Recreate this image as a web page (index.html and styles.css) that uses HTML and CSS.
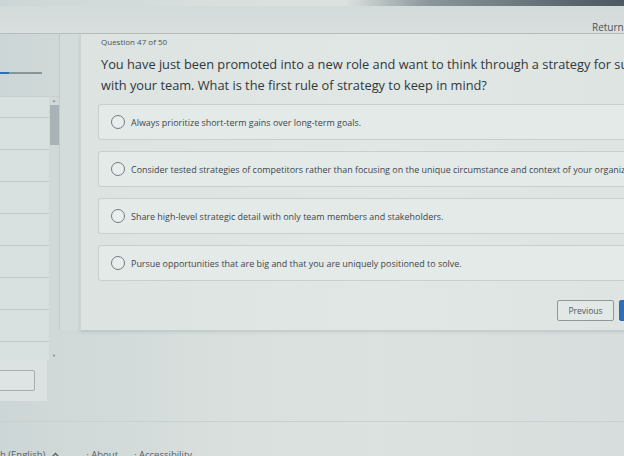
FILE: index.html
```html
<!DOCTYPE html>
<html lang="en">
<head>
<meta charset="utf-8">
<title>Question 47 of 50</title>
<link rel="stylesheet" href="styles.css">
</head>
<body>
<div class="frame">
  <div class="topband"></div>
  <header class="topbar">
    <span class="return">Return</span>
  </header>
  <div class="layout">
    <aside class="sidebar">
      <div class="progress"><div class="progress-fill"></div></div>
      <div class="list">
        <div class="rows">
          <div class="row first"></div>
          <div class="row"></div>
          <div class="row"></div>
          <div class="row"></div>
          <div class="row"></div>
          <div class="row"></div>
          <div class="row"></div>
          <div class="row"></div>
          <div class="row last"></div>
        </div>
        <div class="scrollbar">
          <span class="arrow">&#9650;</span>
          <div class="thumb"></div>
          <div class="track"></div>
          <span class="arrow">&#9660;</span>
        </div>
      </div>
      <div class="search"><div class="input"></div></div>
    </aside>
    <div class="gutter"></div>
    <main class="card">
      <div class="qnum">Question 47 of 50</div>
      <h1 class="qtext">You have just been promoted into a new role and want to think through a strategy for success<br>with your team. What is the first rule of strategy to keep in mind?</h1>
      <ul class="options">
        <li class="option"><span class="radio"></span><span class="label">Always prioritize short-term gains over long-term goals.</span></li>
        <li class="option"><span class="radio"></span><span class="label">Consider tested strategies of competitors rather than focusing on the unique circumstance and context of your organization.</span></li>
        <li class="option"><span class="radio"></span><span class="label">Share high-level strategic detail with only team members and stakeholders.</span></li>
        <li class="option"><span class="radio"></span><span class="label">Pursue opportunities that are big and that you are uniquely positioned to solve.</span></li>
      </ul>
      <div class="nav">
        <button class="btn prev">Previous</button>
        <button class="btn next">Next</button>
      </div>
    </main>
  </div>
  <div class="spacer"></div>
  <footer class="footer">
    <span class="lang">h (English)</span>
    <svg class="caret" width="9" height="6" viewBox="0 0 9 6"><path d="M1 5 L4.5 1.5 L8 5" fill="none" stroke="#55606a" stroke-width="1.3"/></svg>
    <span class="flink">· About</span>
    <span class="flink">· Accessibility</span>
  </footer>
</div>
</body>
</html>
```

FILE: styles.css
```css
html, body {
  margin: 0;
  padding: 0;
  width: 624px;
  height: 456px;
  overflow: hidden;
}
body {
  background: linear-gradient(90deg, #cdd6d6 0%, #d8dfdd 35%, #dce2df 60%, #d6dddc 100%);
  font-family: "Open Sans", "Noto Sans", sans-serif;
  color: #3b4347;
}
.frame {
  width: 690px;
  display: flex;
  flex-direction: column;
}
.topband {
  height: 6px;
  background: linear-gradient(90deg, rgba(0,0,0,0) 0%, rgba(0,0,0,0) 50%, #8c979c 62%, #56626a 85%, #3f4b53 100%);
}
.topbar {
  height: 28px;
  box-sizing: border-box;
  border-bottom: 1px solid #b5bfc0;
  display: flex;
  align-items: center;
  padding-left: 592px;
  padding-top: 14px;
  background: linear-gradient(180deg, #d3dada, #d9dfde);
}
.return {
  font-size: 10px;
  color: #4a5459;
  white-space: nowrap;
}
.layout {
  display: flex;
  align-items: flex-start;
}
.sidebar {
  width: 59px;
  flex: none;
  display: flex;
  flex-direction: column;
}
.progress {
  margin-top: 38px;
  width: 42px;
  height: 2px;
  background: #8a9598;
}
.progress-fill {
  width: 9px;
  height: 2px;
  background: #2f6fb3;
}
.list {
  margin-top: 22px;
  height: 263px;
  display: flex;
  border-top: 1px solid #c6cfcf;
  background: #d8e0e0;
}
.rows {
  width: 49px;
  display: flex;
  flex-direction: column;
}
.row {
  height: 32px;
  border-bottom: 1px solid #c3cccc;
  box-sizing: border-box;
}
.row.first { height: 21px; }
.row.last { height: 18px; border-bottom: none; }
.scrollbar {
  width: 10px;
  background: #d0d8d8;
  display: flex;
  flex-direction: column;
  align-items: center;
}
.arrow {
  font-size: 4px;
  line-height: 8px;
  height: 8px;
  color: #7a8488;
}
.thumb {
  width: 9px;
  height: 40px;
  background: #a9b2b4;
}
.track { flex: 1; }
.search {
  width: 47px;
  height: 41px;
  box-sizing: border-box;
  padding-top: 10px;
  background: #dbe2e1;
  display: flex;
}
.input {
  width: 40px;
  height: 21px;
  margin-left: -5px;
  box-sizing: border-box;
  border: 1px solid #a4aeb0;
  border-radius: 2px;
  background: #dde4e3;
}
.gutter {
  width: 21px;
  height: 296px;
  flex: none;
  border-left: 1px solid #c1cbcb;
  box-sizing: border-box;
  background: #d3dbdb;
}
.card {
  width: 610px;
  flex: none;
  box-sizing: border-box;
  height: 296px;
  padding: 2px 0 0 17px;
  background: linear-gradient(90deg, #dce3e1 0%, #e1e7e4 50%, #dde3e1 100%);
  border-left: 1px solid #ccd4d3;
  box-shadow: 0 2px 3px rgba(120, 135, 135, 0.25);
}
.qnum {
  font-size: 8px;
  line-height: 12px;
  margin-left: 3px;
  color: #4a5357;
}
.qtext {
  margin: 6px 0 0 3px;
  font-size: 12.8px;
  font-weight: 400;
  line-height: 21px;
  white-space: nowrap;
  color: #30383c;
}
.options {
  list-style: none;
  margin: 8px 0 0 0;
  padding: 0;
  display: flex;
  flex-direction: column;
  gap: 11px;
}
.option {
  height: 36px;
  box-sizing: border-box;
  border: 1px solid #c8d0cf;
  border-right: none;
  border-radius: 3px 0 0 3px;
  background: #e4eae8;
  display: flex;
  align-items: center;
  padding-left: 12px;
  white-space: nowrap;
  overflow: hidden;
}
.radio {
  width: 14px;
  height: 14px;
  box-sizing: border-box;
  border: 1.3px solid #737c80;
  border-radius: 50%;
  flex: none;
  background: #e8eeec;
}
.label {
  margin-left: 6px;
  font-size: 8.95px;
  color: #3e464b;
}
.nav {
  margin-top: 19px;
  display: flex;
  justify-content: flex-end;
  gap: 5px;
  padding-right: 16px;
}
.btn {
  height: 21px;
  font-family: "Open Sans", "Noto Sans", sans-serif;
  font-size: 8.5px;
  border-radius: 2px;
  padding: 0;
}
.prev {
  width: 57px;
  border: 1px solid #8f999c;
  background: #e2e8e6;
  color: #50595e;
}
.next {
  width: 55px;
  border: 1px solid #2c6bb0;
  background: #2f6fb5;
  color: #ffffff;
}
.spacer {
  height: 20px;
  border-bottom: 1px solid #c9d1d0;
}
.footer {
  display: flex;
  align-items: center;
  height: 14px;
  padding-top: 26px;
  font-size: 9.5px;
  line-height: 14px;
  color: #55606a;
  white-space: nowrap;
}
.caret { margin-left: 6px; }
.flink { margin-left: 26px; }
.flink + .flink { margin-left: 16px; }
```
